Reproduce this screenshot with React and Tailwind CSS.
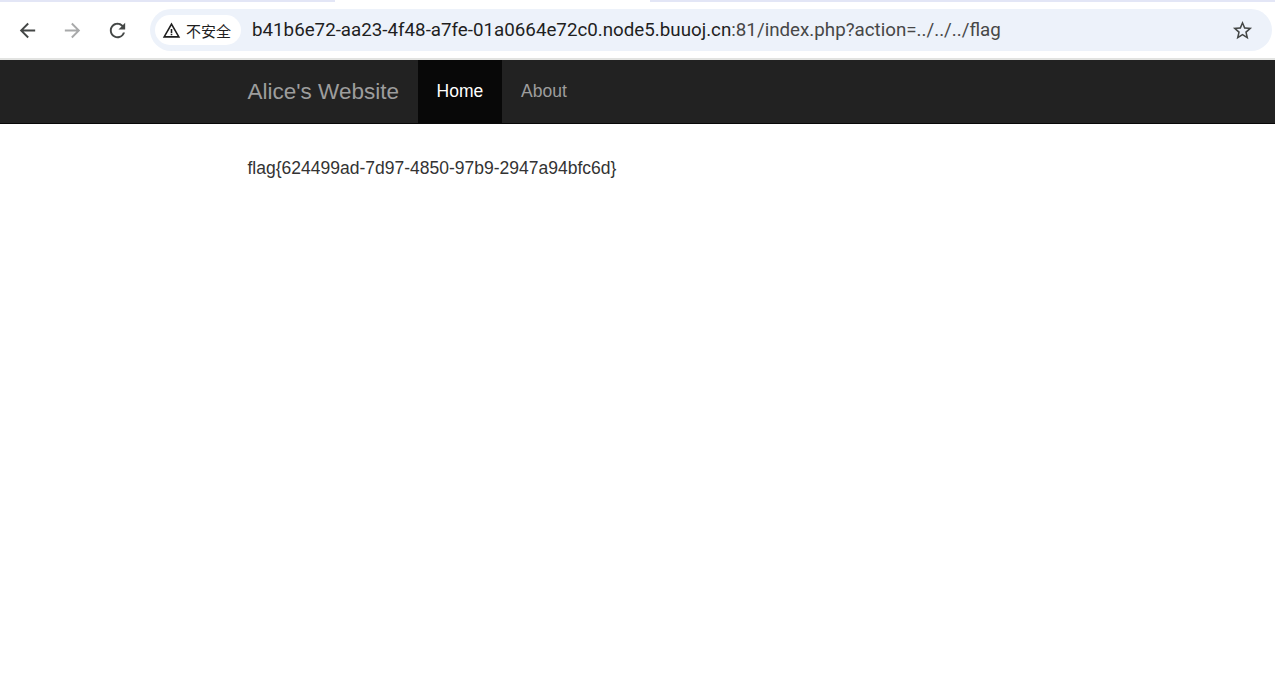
import { MdArrowBack, MdArrowForward, MdRefresh, MdStarBorder, MdWarningAmber } from "react-icons/md";

function BrowserBar() {
  return (
    <div className="bg-white">
      <div className="flex h-[2px]">
        <div className="w-[335px] bg-[#e3e6f6]" />
        <div className="w-[315px] bg-white" />
        <div className="flex-1 bg-[#e3e6f6]" />
      </div>
      <div className="flex h-[56px] items-center">
        <div className="flex w-[150px] shrink-0 items-center gap-[22px] pl-[16px]">
          <MdArrowBack className="h-[23px] w-[23px] text-[#444746]" />
          <MdArrowForward className="h-[23px] w-[23px] text-[#a8a9aa]" />
          <MdRefresh className="h-[23px] w-[23px] text-[#444746]" />
        </div>
        <div className="mr-[3px] flex h-[42px] flex-1 items-center rounded-full bg-[#edf2fa] pl-[5px] pr-[18px]">
          <div className="flex h-[30px] w-[86px] shrink-0 items-center rounded-full bg-white pl-[7px]">
            <MdWarningAmber className="h-[19px] w-[19px] text-[#1f1f1f]" />
            <span className="ml-[5px] font-['Noto_Sans_CJK_SC',sans-serif] text-[15px] leading-none text-[#1f1f1f]">
              不安全
            </span>
          </div>
          <div className="ml-[11px] flex-1 whitespace-nowrap font-['Roboto',sans-serif] text-[18.75px] text-[#1f1f1f]">
            b41b6e72-aa23-4f48-a7fe-01a0664e72c0.node5.buuoj.cn
            <span className="text-[#474747]">:81/index.php?action=../../../flag</span>
          </div>
          <MdStarBorder className="h-[23px] w-[23px] text-[#444746]" />
        </div>
      </div>
      <div className="h-[2px] bg-[#e2e3e1]" />
    </div>
  );
}

function Navbar() {
  return (
    <nav className="h-[64px] border-b border-[#080808] bg-[#222222] font-['Liberation_Sans',sans-serif]">
      <div className="ml-[247.5px] flex h-[63px] items-center">
        <a className="mr-[19px] text-[22.5px] text-[#9d9d9d]">Alice's Website</a>
        <a className="flex h-full w-[84px] items-center justify-center bg-[#080808] text-[17.5px] text-white">
          Home
        </a>
        <a className="flex h-full w-[84px] items-center justify-center text-[17.5px] text-[#9d9d9d]">
          About
        </a>
      </div>
    </nav>
  );
}

export default function App() {
  return (
    <div className="min-h-[700px] bg-white">
      <BrowserBar />
      <Navbar />
      <div className="pl-[247.5px] pt-[31px] font-['Liberation_Sans',sans-serif] text-[17.5px] leading-[26px] text-[#333333]">
        flag{"{"}624499ad-7d97-4850-97b9-2947a94bfc6d{"}"}
      </div>
    </div>
  );
}
